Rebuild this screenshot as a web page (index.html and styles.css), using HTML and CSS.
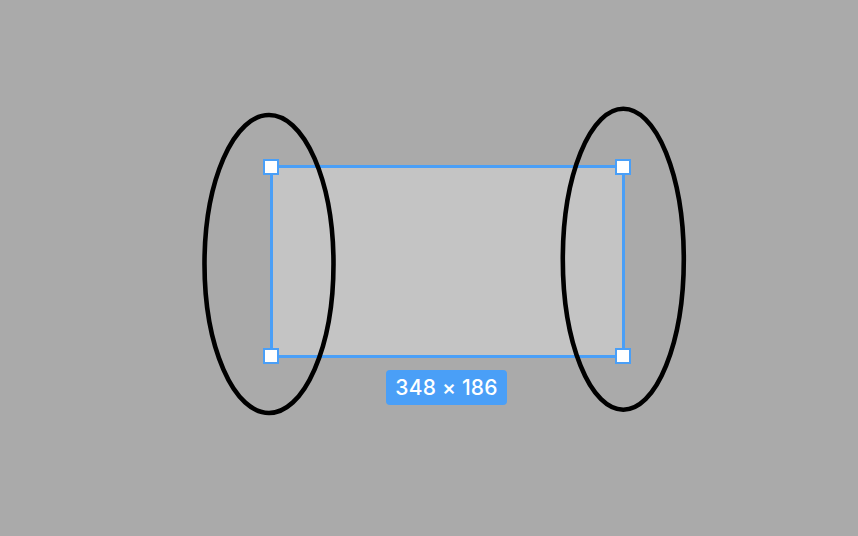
FILE: index.html
```html
<!DOCTYPE html>
<html>
<head>
<meta charset="utf-8">
<link rel="stylesheet" href="styles.css">
</head>
<body>
<div class="canvas">
  <div class="shape"></div>
  <span class="handle h-tl"></span>
  <span class="handle h-tr"></span>
  <span class="handle h-bl"></span>
  <span class="handle h-br"></span>
  <div class="size-label">348 × 186</div>
  <svg class="annotations" width="858" height="536" viewBox="0 0 858 536">
    <ellipse cx="269" cy="264" rx="64.5" ry="149" fill="none" stroke="#000" stroke-width="4.6"/>
    <ellipse cx="623.3" cy="259.2" rx="60.5" ry="150.5" fill="none" stroke="#000" stroke-width="4.6"/>
  </svg>
</div>
</body>
</html>
```
FILE: styles.css
```css
html, body {
  margin: 0;
  padding: 0;
  background: #aaaaaa;
}
.canvas {
  position: relative;
  width: 858px;
  height: 536px;
  overflow: hidden;
  background: #aaaaaa;
  font-family: Inter, "Noto Sans", sans-serif;
}
.shape {
  position: absolute;
  left: 270px;
  top: 165px;
  width: 355px;
  height: 193px;
  box-sizing: border-box;
  background: #c4c4c4;
  border: 3px solid #4a9ff7;
}
.handle {
  position: absolute;
  width: 16px;
  height: 16px;
  box-sizing: border-box;
  background: #ffffff;
  border: 2px solid #4a9ff7;
  z-index: 2;
}
.h-tl { left: 263px; top: 159px; }
.h-tr { left: 615px; top: 159px; }
.h-bl { left: 263px; top: 348px; }
.h-br { left: 615px; top: 348px; }
.size-label {
  position: absolute;
  left: 386px;
  top: 370px;
  width: 121px;
  height: 35px;
  border-radius: 4px;
  background: #4a9ff7;
  color: #ffffff;
  font-size: 21px;
  font-weight: 500;
  line-height: 35px;
  text-align: center;
  letter-spacing: 0.2px;
}
.annotations {
  position: absolute;
  left: 0;
  top: 0;
  z-index: 3;
  pointer-events: none;
}
```
